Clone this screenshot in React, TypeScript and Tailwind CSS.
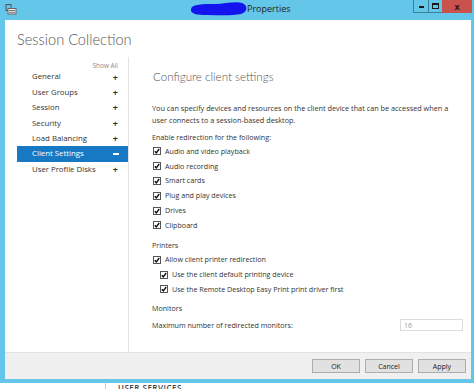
const sections = [
  { name: "General", open: false },
  { name: "User Groups", open: false },
  { name: "Session", open: false },
  { name: "Security", open: false },
  { name: "Load Balancing", open: false },
  { name: "Client Settings", open: true },
  { name: "User Profile Disks", open: false },
];

const redirections = [
  "Audio and video playback",
  "Audio recording",
  "Smart cards",
  "Plug and play devices",
  "Drives",
  "Clipboard",
];

function Check({ indent = false, label }: { indent?: boolean; label: string }) {
  return (
    <div className={`flex h-[14.9px] items-center ${indent ? "pl-[8px]" : "pl-[1px]"}`}>
      <svg width="8" height="8" viewBox="0 0 8 8" className="shrink-0">
        <rect x="0.5" y="0.5" width="7" height="7" fill="#fff" stroke="#555" />
        <path d="M1.8 4.2 L3.3 5.8 L6.2 2" fill="none" stroke="#111" strokeWidth="1.4" />
      </svg>
      <span className="ml-[4px]">{label}</span>
    </div>
  );
}

export default function App() {
  return (
    <div className="relative h-[389px] w-[474px] overflow-hidden bg-white font-['Open_Sans',sans-serif] text-[#333]">
      <div className="flex h-[383px] flex-col bg-[#64c6e8]">
        {/* title bar */}
        <div className="relative flex h-[20px] shrink-0 items-start">
          <svg width="12" height="11" viewBox="0 0 12 11" className="ml-[5px] mt-[4px]">
            <rect x="1" y="0.5" width="5" height="6" fill="none" stroke="#555" />
            <rect x="3" y="4.5" width="8" height="5.5" fill="#eee" stroke="#666" />
            <path d="M4 6.5h6M4 8.3h6" stroke="#777" />
          </svg>
          <div className="absolute left-[189px] top-[1px] flex items-center">
            <svg width="60" height="16" viewBox="0 0 60 16">
              <path
                d="M2 8 C3 3, 14 3, 26 3 C36 3, 46 0, 53 2 C59 4, 59 11, 52 13 C42 15, 30 14, 18 14 C8 14, 1 13, 2 8 Z"
                fill="#1414ee"
              />
            </svg>
            <span className="-ml-[2px] text-[9px] text-[#1e1e1e]">Properties</span>
          </div>
          <div className="ml-auto flex h-[13px] items-stretch">
            <div className="flex w-[15px] items-end justify-center border-b border-l border-[#3d7e98] pb-[4px]">
              <div className="h-[2px] w-[5px] bg-[#1a1a1a]" />
            </div>
            <div className="flex w-[14px] items-center justify-center border-b border-l border-[#3d7e98]">
              <div className="h-[6px] w-[7px] border-[1.5px] border-t-2 border-[#1a1a1a]" />
            </div>
            <div className="flex w-[30px] items-center justify-center bg-[#c9524c] text-[9px] font-bold leading-none text-[#3a1512]">
              x
            </div>
            <div className="w-[2px]" />
          </div>
        </div>

        {/* body */}
        <div className="ml-[5px] mr-[3px] flex flex-1 flex-col bg-white">
          <div className="h-[37px] shrink-0 pl-[12px] pt-[10px] font-['Lato',sans-serif] text-[14.6px] font-light leading-[20px] text-[#555]">
            Session Collection
          </div>
          <div className="flex flex-1">
            {/* sidebar */}
            <div className="w-[124px] shrink-0 border-r border-[#e3e3e3] pl-[12px]">
              <div className="flex h-[12.5px] items-end justify-end pr-[10px] text-[6.5px] leading-[9px] text-[#8a8a8a]">
                Show All
              </div>
              {sections.map((s) => (
                <div
                  key={s.name}
                  className={`flex h-[15.4px] items-center justify-between pl-[15px] pr-[10px] text-[7.8px] ${
                    s.open ? "bg-[#1779c4] text-white" : "text-[#333]"
                  }`}
                >
                  <span>{s.name}</span>
                  {s.open ? (
                    <span className="mr-[-1px] h-[1.5px] w-[6px] bg-white" />
                  ) : (
                    <span className="text-[9px] font-bold leading-none">+</span>
                  )}
                </div>
              ))}
            </div>

            {/* main */}
            <div className="flex-1 pl-[23px] pr-[8px] pt-[12px] text-[7.15px]">
              <div className="h-[16px] pl-[1px] font-['Lato',sans-serif] text-[11.6px] font-light leading-[16px] text-[#555]">
                Configure client settings
              </div>
              <p className="mt-[16.5px] w-[302px] text-[7.3px] leading-[12.3px]">
                You can specify devices and resources on the client device that can be accessed when a user
                connects to a session-based desktop.
              </p>
              <div className="mt-[5px] leading-[12px]">Enable redirection for the following:</div>
              <div className="mt-[0.5px]">
                {redirections.map((r) => (
                  <Check key={r} label={r} />
                ))}
              </div>
              <div className="mt-[6.4px] leading-[12px]">Printers</div>
              <div className="mt-[0.9px]">
                <Check label="Allow client printer redirection" />
                <Check indent label="Use the client default printing device" />
                <Check indent label="Use the Remote Desktop Easy Print print driver first" />
              </div>
              <div className="mt-[5.4px] leading-[12px]">Monitors</div>
              <div className="mt-[3.2px] flex h-[14.9px] items-center justify-between">
                <span>Maximum number of redirected monitors:</span>
                <div className="flex h-[12px] w-[63px] items-center border border-[#dcdcdc] pl-[3px] text-[#9a9a9a]">
                  16
                </div>
              </div>
            </div>
          </div>

          {/* footer */}
          <div className="flex h-[27px] shrink-0 items-center justify-end gap-[5px] border-t border-[#e2e2e2] bg-[#f0f0f0] pr-[5px]">
            {["OK", "Cancel", "Apply"].map((b) => (
              <button
                key={b}
                className="h-[14px] w-[48px] border border-[#adadad] bg-[#e1e1e1] text-[7px] leading-none text-[#222]"
              >
                {b}
              </button>
            ))}
          </div>
        </div>
        <div className="h-[4px] shrink-0" />
      </div>

      {/* whatever is behind the dialog */}
      <div className="relative h-[6px] overflow-hidden">
        <div className="absolute left-[105px] top-0 h-[6px] w-px bg-[#ccc]" />
        <div className="absolute left-[118px] top-[1px] text-[8px] font-semibold leading-none tracking-[0.5px] text-[#444]">
          USER SERVICES
        </div>
      </div>
    </div>
  );
}
